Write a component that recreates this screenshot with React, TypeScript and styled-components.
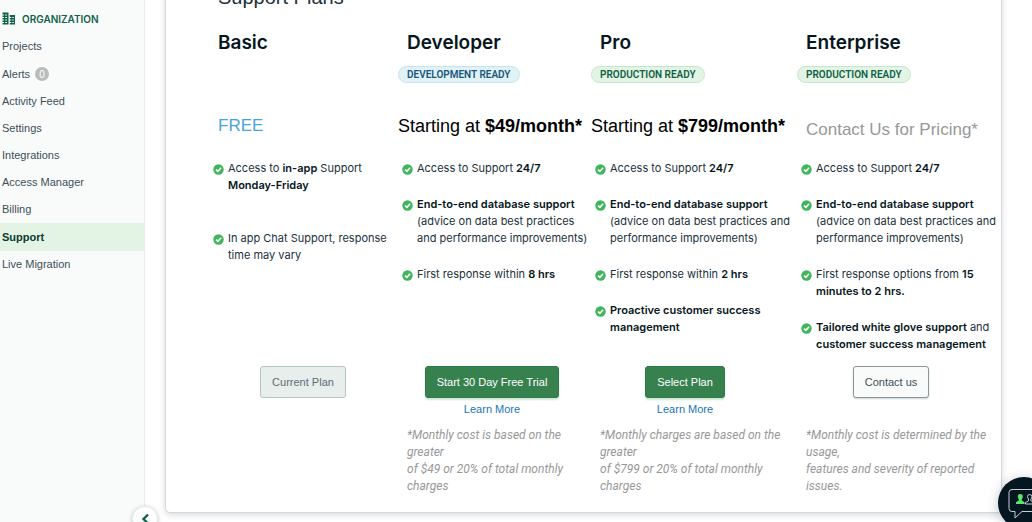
import React from "react";
import styled, { createGlobalStyle, css } from "styled-components";

const sans = `"Liberation Sans", Arial, sans-serif`;
const condensed = `Roboto, "Liberation Sans", sans-serif`;
const text = `Inter, "Liberation Sans", sans-serif`;

const GlobalStyle = createGlobalStyle`
  * { box-sizing: border-box; }
  html, body { margin: 0; background: #fff; }
  body { font-family: ${sans}; font-size: 11px; color: #3d4f58; overflow: hidden; }
  h1, h2, p, ul { margin: 0; padding: 0; }
  ul { list-style: none; }
`;

const Page = styled.div`
  display: flex;
  height: 100vh;
  overflow: hidden;
`;

const Sidebar = styled.nav`
  flex: 0 0 145px;
  padding-top: 4px;
  background: #f9fbfa;
  border-right: 1px solid #e7eeec;
`;

const SidebarTitle = styled.div`
  display: flex;
  align-items: center;
  gap: 6px;
  height: 29px;
  padding-left: 2px;
  font-size: 10px;
  font-weight: 600;
  font-family: ${text};
  color: #116149;
  text-transform: uppercase;
`;

const NavLink = styled.a<{ $active?: boolean }>`
  display: flex;
  align-items: center;
  gap: 5px;
  padding: 7px 2px;
  line-height: 13px;
  color: #3d4f58;
  text-decoration: none;
  ${(p) =>
    p.$active &&
    css`
      height: 28px;
      background: #e4f4e4;
      color: #0b3b35;
      font-weight: 700;
    `}
`;

const Count = styled.span`
  display: grid;
  place-items: center;
  width: 14px;
  height: 14px;
  border-radius: 7px;
  background: #b8bcbb;
  color: #fff;
  font-size: 10px;
`;

const Main = styled.main`
  flex: 1;
  min-width: 0;
  padding: 0 30px 0 20px;
`;

const Panel = styled.section`
  margin-top: -16px;
  padding: 0 0 17px 43px;
  background: #fff;
  border: 1px solid #d3d8dd;
  border-radius: 5px;
  box-shadow: 0 2px 6px rgba(6, 22, 33, 0.15);
`;

const PanelTitle = styled.h1`
  padding-left: 9px;
  font-size: 20px;
  line-height: 24px;
  font-weight: 400;
  color: #21313c;
`;

const Plans = styled.div`
  display: grid;
  grid-template-columns:
    minmax(0, 189fr) minmax(0, 193fr) minmax(0, 206fr)
    minmax(0, 204fr);
  grid-template-rows: auto auto auto auto auto;
  margin-top: 22px;
`;

const Plan = styled.article`
  display: grid;
  grid-row: span 5;
  grid-template-rows: subgrid;
`;

const PlanHeader = styled.header`
  display: flex;
  flex-direction: column;
  align-items: flex-start;
  gap: 11px;
  padding-bottom: 31px;
`;

const PlanName = styled.h2`
  padding-left: 9px;
  font-family: ${text};
  font-size: 19px;
  line-height: 24px;
  font-weight: 600;
  color: #061621;
`;

const Badge = styled.span<{ $tone: "blue" | "green" }>`
  padding: 0 8px;
  border: 1px solid ${(p) => (p.$tone === "blue" ? "#c5e4f2" : "#c3e7ca")};
  border-radius: 9px;
  background: ${(p) => (p.$tone === "blue" ? "#e1f2f6" : "#e4f4e4")};
  color: ${(p) => (p.$tone === "blue" ? "#1a567e" : "#116149")};
  font-family: ${condensed};
  font-size: 10px;
  line-height: 15px;
  font-weight: 600;
  text-transform: uppercase;
  white-space: nowrap;
`;

const Price = styled.p<{ $tone?: "free" | "muted" }>`
  font-size: 18px;
  line-height: 24px;
  color: #000;
  white-space: nowrap;
  ${(p) => p.$tone && css`padding-left: 9px; font-size: 17px;`}
  ${(p) => p.$tone === "free" && css`color: #4aa3e0;`}
  ${(p) => p.$tone === "muted" && css`padding-top: 4px; color: #989898;`}
`;

const Features = styled.ul<{ $roomy?: boolean }>`
  display: flex;
  flex-direction: column;
  gap: ${(p) => (p.$roomy ? 36 : 19)}px;
  padding: 18px 0 13px 4px;
`;

const Feature = styled.li`
  display: flex;
  gap: 4px;
  font-family: ${text};
  line-height: 17px;
  color: #21313c;

  svg {
    flex: none;
    margin-top: 4px;
  }

  strong {
    font-weight: 600;
    color: #061621;
  }
`;

const Actions = styled.div`
  display: flex;
  flex-direction: column;
  align-items: center;
  gap: 3px;
  max-width: 188px;
`;

const Button = styled.button<{ $kind: "primary" | "outline" }>`
  height: 32px;
  padding: 0 11px;
  border: 1px solid #89979b;
  border-radius: 3px;
  background: #f9fbfa;
  color: #3d4f58;
  font: 11px ${sans};
  white-space: nowrap;
  box-shadow: 0 1px 2px rgba(6, 22, 33, 0.2);
  ${(p) =>
    p.$kind === "primary" &&
    css`
      border-color: #2f7a49;
      background: #37814f;
      color: #fff;
      box-shadow: 0 2px 2px #cfe8d5;
    `}
  &:disabled {
    border-color: #b8c4c2;
    background: #e7eeec;
    color: #5d6c74;
    box-shadow: none;
  }
`;

const LearnMore = styled.a`
  line-height: 17px;
  color: #1a76b5;
  text-decoration: none;
`;

const Note = styled.p`
  max-width: 196px;
  padding: 9px 0 0 9px;
  font-family: ${condensed};
  font-size: 12px;
  font-style: italic;
  line-height: 17px;
  color: #989898;
`;

const Collapse = styled.button`
  position: fixed;
  left: 132px;
  bottom: -10px;
  display: grid;
  place-items: center;
  width: 26px;
  height: 26px;
  padding: 0;
  border: 1px solid #e7eeec;
  border-radius: 13px;
  background: #fff;
  box-shadow: 0 1px 4px rgba(6, 22, 33, 0.25);
`;

const Chat = styled.button`
  position: fixed;
  right: -18px;
  bottom: -7px;
  width: 52px;
  height: 52px;
  padding: 0;
  border: 0;
  border-radius: 26px;
  background: #061621;
  box-shadow: 0 2px 12px rgba(6, 22, 33, 0.25);
`;

const Check = () => (
  <svg width="11" height="11" viewBox="0 0 11 11" aria-hidden="true">
    <circle cx="5.5" cy="5.5" r="5.2" fill="#3fb65c" />
    <path d="M3 5.6 4.9 7.4 8.1 3.8" fill="none" stroke="#fff" strokeWidth="1.6" />
  </svg>
);

const OrgIcon = () => (
  <svg width="14" height="13" viewBox="0 0 14 13" aria-hidden="true">
    <path
      fill="#116149"
      fillRule="evenodd"
      d="M0.500 0.500H6.500V12.500H0.500V11H2V10H0.500V8.500H2V7.500H0.500V6H2V5H0.500V3.500H2V2.500H0.500zM3.200 2.500V3.500H5V2.500zM3.200 5V6H5V5zM3.200 7.500V8.500H5V7.500zM3.200 10V11H5V10zM7.800 3H13V12.500H7.800V11H9.300V10H7.800V8.500H9.300V7.500H7.800V6H9.300V5H7.800zM10.300 5V6H11.800V5zM10.300 7.500V8.500H11.800V7.500zM10.300 10V11H11.800V10z"
    />
  </svg>
);

const navItems = [
  { label: "Projects" },
  { label: "Alerts", count: 0 },
  { label: "Activity Feed" },
  { label: "Settings" },
  { label: "Integrations" },
  { label: "Access Manager" },
  { label: "Billing" },
  { label: "Support", active: true },
  { label: "Live Migration" },
];

interface PlanData {
  name: string;
  badge?: { label: string; tone: "blue" | "green" };
  price: React.ReactNode;
  priceTone?: "free" | "muted";
  features: React.ReactNode[];
  roomy?: boolean;
  action: { label: string; kind: "primary" | "outline"; disabled?: boolean };
  learnMore?: boolean;
  note?: React.ReactNode;
}

const plans: PlanData[] = [
  {
    name: "Basic",
    price: "FREE",
    priceTone: "free",
    roomy: true,
    features: [
      <>Access to <strong>in-app</strong> Support <strong>Monday-Friday</strong></>,
      <>In app Chat Support, response time may vary</>,
    ],
    action: { label: "Current Plan", kind: "outline", disabled: true },
  },
  {
    name: "Developer",
    badge: { label: "Development Ready", tone: "blue" },
    price: <>Starting at <strong>$49/month*</strong></>,
    features: [
      <>Access to Support <strong>24/7</strong></>,
      <><strong>End-to-end database support</strong> (advice on data best practices and performance improvements)</>,
      <>First response within <strong>8 hrs</strong></>,
    ],
    action: { label: "Start 30 Day Free Trial", kind: "primary" },
    learnMore: true,
    note: <>*Monthly cost is based on the greater<br />of $49 or 20% of total monthly charges</>,
  },
  {
    name: "Pro",
    badge: { label: "Production Ready", tone: "green" },
    price: <>Starting at <strong>$799/month*</strong></>,
    features: [
      <>Access to Support <strong>24/7</strong></>,
      <><strong>End-to-end database support</strong> (advice on data best practices and performance improvements)</>,
      <>First response within <strong>2 hrs</strong></>,
      <strong>Proactive customer success management</strong>,
    ],
    action: { label: "Select Plan", kind: "primary" },
    learnMore: true,
    note: <>*Monthly charges are based on the greater<br />of $799 or 20% of total monthly charges</>,
  },
  {
    name: "Enterprise",
    badge: { label: "Production Ready", tone: "green" },
    price: "Contact Us for Pricing*",
    priceTone: "muted",
    features: [
      <>Access to Support <strong>24/7</strong></>,
      <><strong>End-to-end database support</strong> (advice on data best practices and performance improvements)</>,
      <>First response options from <strong>15 minutes to 2 hrs.</strong></>,
      <><strong>Tailored white glove support</strong> and <strong>customer success management</strong></>,
    ],
    action: { label: "Contact us", kind: "outline" },
    note: <>*Monthly cost is determined by the usage,<br />features and severity of reported issues.</>,
  },
];

export default function App() {
  return (
    <Page>
      <GlobalStyle />
      <Sidebar aria-label="Organization">
        <SidebarTitle><OrgIcon />Organization</SidebarTitle>
        <ul>
          {navItems.map((item) => (
            <li key={item.label}>
              <NavLink href="#" $active={item.active} aria-current={item.active ? "page" : undefined}>
                {item.label}
                {item.count !== undefined && <Count>{item.count}</Count>}
              </NavLink>
            </li>
          ))}
        </ul>
      </Sidebar>
      <Main>
        <Panel>
          <PanelTitle>Support Plans</PanelTitle>
          <Plans>
            {plans.map((plan) => (
              <Plan key={plan.name}>
                <PlanHeader>
                  <PlanName>{plan.name}</PlanName>
                  {plan.badge && <Badge $tone={plan.badge.tone}>{plan.badge.label}</Badge>}
                </PlanHeader>
                <Price $tone={plan.priceTone}>{plan.price}</Price>
                <Features $roomy={plan.roomy}>
                  {plan.features.map((feature, i) => (
                    <Feature key={i}><Check /><div>{feature}</div></Feature>
                  ))}
                </Features>
                <Actions>
                  <Button type="button" $kind={plan.action.kind} disabled={plan.action.disabled}>
                    {plan.action.label}
                  </Button>
                  {plan.learnMore && <LearnMore href="#">Learn More</LearnMore>}
                </Actions>
                {plan.note && <Note>{plan.note}</Note>}
              </Plan>
            ))}
          </Plans>
        </Panel>
      </Main>
      <Collapse type="button" aria-label="Collapse sidebar">
        <svg width="9" height="12" viewBox="0 0 9 12" aria-hidden="true">
          <path d="M7 1.500 2.500 6 7 10.500" fill="none" stroke="#116149" strokeWidth="2.400" />
        </svg>
      </Collapse>
      <Chat type="button" aria-label="Open support chat">
        <svg width="52" height="52" viewBox="0 0 52 52" aria-hidden="true">
          <path
            d="M14 12.500h24q3 0 3 3v16q0 3-3 3H24l-7 6.500v-6.500h-3q-3 0-3-3v-16q0-3 3-3z"
            fill="none"
            stroke="#c8d0d4"
          />
          <path d="M18 27v-1.800l2.800-1.700V22q-1-1-1-2.500 0-2.500 2.500-2.500t2.500 2.500q0 1.500-1 2.500v1.500l2.800 1.700V27z" fill="#5ee36f" />
          <path d="M27.500 27v-1.500l3-1.700V22q-1-1-1-2.300 0-2.200 2.200-2.200t2.200 2.200q0 1.300-1 2.300v1.800l3 1.700V27z" fill="none" stroke="#c8d0d4" />
        </svg>
      </Chat>
    </Page>
  );
}
